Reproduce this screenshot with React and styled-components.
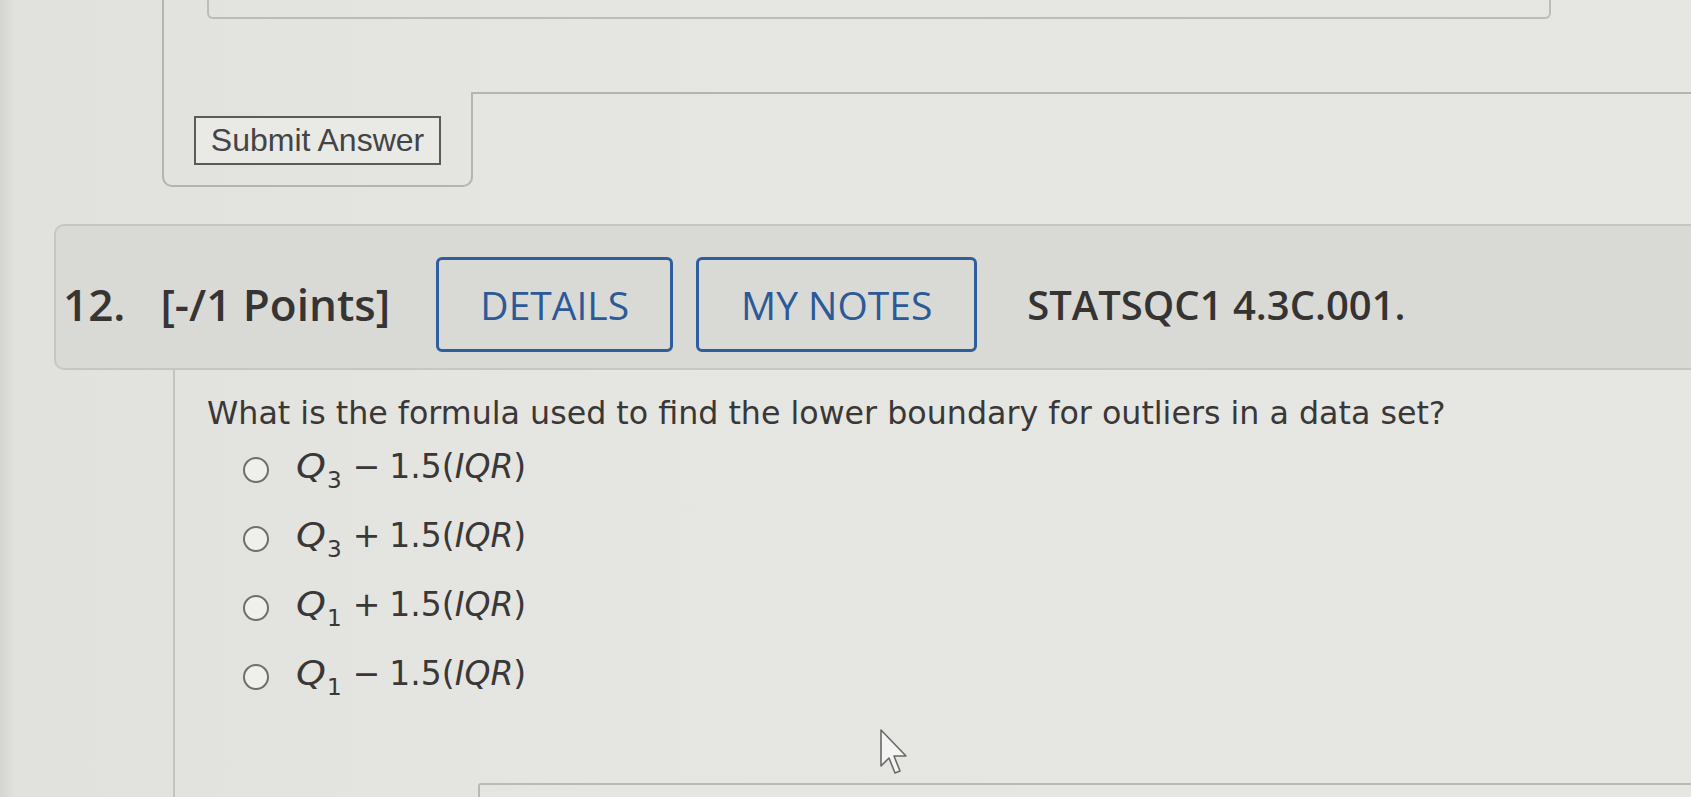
import React from 'react'
import styled, { createGlobalStyle } from 'styled-components'

const GlobalStyle = createGlobalStyle`
    html, body {
        margin: 0;
        padding: 0;
        background: #e3e3e0;
    }
    body {
        font-family: "Open Sans", "DejaVu Sans", sans-serif;
        overflow: hidden;
    }
`

const Page = styled.div`
    position: relative;
    width: 1691px;
    height: 797px;
    overflow: hidden;
    background: linear-gradient(90deg, #d4d4d1 0px, #e1e1de 14px, #e5e5e2 600px, #e6e6e3 1691px);
`

// previous question (only its bottom is on screen)
const PrevBody = styled.div`
    margin-left: 162px;
    height: 92px;
    padding-left: 43px;
    border-left: 2px solid #b4b4b1;
    box-sizing: border-box;
`

const AnswerBox = styled.div`
    width: 1344px;
    height: 19px;
    border: 2px solid #bcbcb9;
    border-top: none;
    border-radius: 0 0 6px 6px;
    box-sizing: border-box;
`

const PrevFoot = styled.div`
    display: flex;
    margin-left: 162px;
`

const SubmitTab = styled.div`
    width: 311px;
    height: 95px;
    padding: 24px 0 0 30px;
    border: 2px solid #b4b4b1;
    border-top: none;
    border-radius: 0 0 10px 10px;
    box-sizing: border-box;
`

const TabRest = styled.div`
    flex: 1;
    border-top: 2px solid #b4b4b1;
`

const SubmitButton = styled.button`
    width: 247px;
    height: 49px;
    background: #e9e9e6;
    border: 2px solid #5a5a58;
    border-radius: 0;
    color: #444;
    font-family: "Liberation Sans", Arial, sans-serif;
    font-size: 32px;
    padding: 0;
`

// question header
const QuestionHeader = styled.div`
    display: flex;
    align-items: center;
    margin: 37px 0 0 54px;
    height: 146px;
    padding: 14px 0 0 7px;
    background: #d9d9d6;
    border: 2px solid #c6c6c3;
    border-right: none;
    border-radius: 10px 0 0 10px;
    box-sizing: border-box;
`

const PointsLabel = styled.div`
    font-size: 44px;
    font-weight: 600;
    color: #373434;
    margin-right: 46px;
    white-space: nowrap;
`

const Number = styled.span`
    margin-right: 35px;
`

const OutlineButton = styled.button`
    width: ${p => p.w}px;
    height: 95px;
    margin-right: ${p => p.gap}px;
    background: transparent;
    border: 3px solid #2e5e9e;
    border-radius: 6px;
    color: #2c5a98;
    font-family: "Open Sans", sans-serif;
    font-size: 39px;
    padding: 0;
`

const QuestionCode = styled.div`
    font-size: 40px;
    font-weight: 600;
    color: #363333;
    white-space: nowrap;
`

// question body
const QuestionBody = styled.div`
    margin-left: 173px;
    padding: 23px 0 0 32px;
    height: 440px;
    border-left: 2px solid #c3c3c0;
    box-sizing: border-box;
`

const Prompt = styled.div`
    font-family: "DejaVu Sans", Verdana, sans-serif;
    font-size: 31.7px;
    color: #3a3737;
    line-height: 40px;
    white-space: nowrap;
`

const Options = styled.div`
    display: flex;
    flex-direction: column;
    gap: 23px;
    margin: 14px 0 0 36px;
`

const OptionRow = styled.label`
    display: flex;
    align-items: center;
    height: 46px;
    gap: 27px;
`

const Radio = styled.span`
    width: 22px;
    height: 22px;
    border: 2px solid #6e6e6c;
    border-radius: 50%;
    background: #efefec;
    flex-shrink: 0;
`

const Formula = styled.span`
    font-family: "DejaVu Sans", Verdana, sans-serif;
    font-size: 33px;
    color: #3a3737;
    white-space: nowrap;
`

const Var = styled.i`
    font-style: italic;
`

const QVar = styled(Var)`
    display: inline-block;
    transform: scaleX(1.15);
    transform-origin: left center;
    margin-right: 5px;
`

const Sub = styled.sub`
    font-size: 0.7em;
    vertical-align: -0.45em;
`

const Op = styled.span`
    margin: 0 9px 0 11px;
`

const NextBox = styled.div`
    margin: 83px 0 0 271px;
    height: 40px;
    border-top: 2px solid #b9b9b6;
    border-left: 2px solid #b9b9b6;
    border-radius: 3px 0 0 0;
`

const Cursor = styled.svg`
    position: absolute;
    left: 879px;
    top: 728px;
`

const options = [
    { sub: '3', op: '\u2212' },
    { sub: '3', op: '+' },
    { sub: '1', op: '+' },
    { sub: '1', op: '\u2212' },
]

function App() {
    return (
        <Page>
            <GlobalStyle />

            <PrevBody>
                <AnswerBox />
            </PrevBody>
            <PrevFoot>
                <SubmitTab>
                    <SubmitButton>Submit Answer</SubmitButton>
                </SubmitTab>
                <TabRest />
            </PrevFoot>

            <QuestionHeader>
                <PointsLabel><Number>12.</Number>[-/1 Points]</PointsLabel>
                <OutlineButton w={237} gap={23}>DETAILS</OutlineButton>
                <OutlineButton w={281} gap={50}>MY NOTES</OutlineButton>
                <QuestionCode>STATSQC1 4.3C.001.</QuestionCode>
            </QuestionHeader>

            <QuestionBody>
                <Prompt>What is the formula used to find the lower boundary for outliers in a data set?</Prompt>
                <Options>
                    {options.map((o, i) => (
                        <OptionRow key={i}>
                            <Radio />
                            <Formula>
                                <QVar>Q</QVar><Sub>{o.sub}</Sub>
                                <Op>{o.op}</Op>1.5(<Var>IQR</Var>)
                            </Formula>
                        </OptionRow>
                    ))}
                </Options>
                <NextBox />
            </QuestionBody>

            <Cursor width="32" height="48" viewBox="0 0 32 48">
                <path d="M2 2 L2 38 L10 30 L16 45 L21 43 L15 28 L27 28 Z" fill="#f4f4f2" stroke="#6a6a68" strokeWidth="1.6" strokeLinejoin="round" />
            </Cursor>
        </Page>
    )
}

export default App
